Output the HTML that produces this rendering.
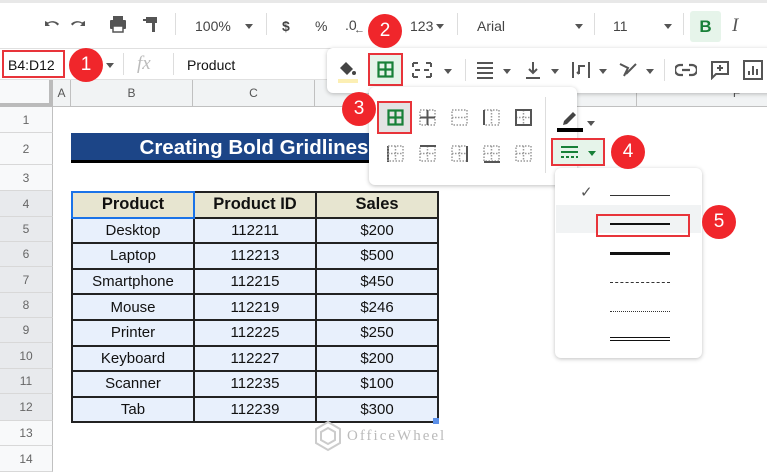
<!DOCTYPE html>
<html><head><meta charset="utf-8">
<style>
*{margin:0;padding:0;box-sizing:border-box}
body{width:767px;height:475px;overflow:hidden;background:#fff;font-family:"Liberation Sans",Arial,sans-serif;position:relative;color:#222}
.a{position:absolute}
.t{position:absolute;font-size:14px;color:#444}
.tri{position:absolute;width:0;height:0;border-left:4px solid transparent;border-right:4px solid transparent;border-top:5px solid #555}
.badge{position:absolute;width:34px;height:34px;border-radius:50%;background:#f0262b;color:#fff;font-size:19px;text-align:center;line-height:34px}
.rh{position:absolute;left:0;width:53px;background:#f8f9fa;border-right:1px solid #c0c0c0;border-bottom:1px solid #d8d8d8;font-size:12px;color:#666;text-align:center}
.ch{position:absolute;top:80px;height:27px;background:#f1f3f4;border-right:1px solid #c0c0c0;border-bottom:1px solid #c0c0c0;font-size:12px;color:#555;text-align:center;line-height:27px}
table{position:absolute;left:71px;top:191px;border-collapse:collapse}
td{width:122px;height:25.6px;border:2px solid #222;text-align:center;font-size:15px;background:#e8f0fc;padding:0;color:#111}
tr:first-child td{background:#e7e5d0;font-weight:bold;font-size:16.5px}
.card{position:absolute;background:#fff;border-radius:6px;box-shadow:0 1px 4px rgba(0,0,0,.25)}
.hl{position:absolute;border:2px solid #e8343a}
</style></head><body>
<div class="a" style="left:0;top:0;width:767px;height:3px;background:#e8e8e8"></div>
<svg class="a" style="left:40px;top:14px" width="140" height="22" viewBox="0 0 140 22" fill="#555">
<path d="M5 7v5h5l-2-2c2-2 6-2 8 0l1.5 1.5 1.5-1.5C17 7 11 6 8 8.5z" />
<path d="M45 7v5h-5l2-2c-2-2-6-2-8 0l-1.5 1.5L31 10c2-3 8-4 11-1.5z"/>
<rect x="70" y="6" width="16" height="9" rx="1"/><rect x="73" y="2" width="10" height="4"/><rect x="73" y="12" width="10" height="6" fill="#fff" stroke="#555" stroke-width="1.5"/>
<rect x="106" y="3" width="11" height="6"/><rect x="112" y="9" width="3" height="9"/><rect x="103" y="5" width="3" height="2"/>
</svg>
<div class="a" style="left:175px;top:13px;width:1px;height:22px;background:#ddd"></div>
<div class="t" style="left:195px;top:18px">100%</div>
<div class="tri" style="left:245px;top:24px"></div>
<div class="a" style="left:266px;top:13px;width:1px;height:22px;background:#ddd"></div>
<div class="t" style="left:282px;top:18px;font-weight:bold">$</div>
<div class="t" style="left:315px;top:18px">%</div>
<div class="t" style="left:345px;top:17px">.0</div>
<div class="t" style="left:354px;top:24px;font-size:11px">←</div>
<div class="t" style="left:410px;top:18px">123</div>
<div class="tri" style="left:436px;top:24px"></div>
<div class="a" style="left:457px;top:13px;width:1px;height:22px;background:#ddd"></div>
<div class="t" style="left:477px;top:18px">Arial</div>
<div class="tri" style="left:575px;top:24px"></div>
<div class="a" style="left:594px;top:13px;width:1px;height:22px;background:#ddd"></div>
<div class="t" style="left:613px;top:18px">11</div>
<div class="tri" style="left:664px;top:24px"></div>
<div class="a" style="left:683px;top:13px;width:1px;height:22px;background:#ddd"></div>
<div class="a" style="left:690px;top:11px;width:31px;height:31px;background:#e6f4ea;border-radius:3px;color:#188038;font-weight:bold;font-size:17px;text-align:center;line-height:31px">B</div>
<div class="t" style="left:732px;top:15px;font-size:19px;font-style:italic;font-family:'Liberation Serif',serif;color:#555">I</div>
<div class="a" style="left:0;top:48px;width:767px;height:32px;border-top:1px solid #e0e0e0;border-bottom:1px solid #e0e0e0"></div>
<div class="t" style="left:8px;top:57px;color:#111">B4:D12</div>
<div class="hl" style="left:2px;top:50px;width:63px;height:28px"></div>
<div class="tri" style="left:106px;top:63px"></div>
<div class="a" style="left:123px;top:53px;width:1px;height:22px;background:#ddd"></div>
<div class="t" style="left:137px;top:53px;font-size:19px;font-style:italic;font-family:'Liberation Serif',serif;color:#bbb">fx</div>
<div class="a" style="left:173px;top:53px;width:1px;height:22px;background:#ddd"></div>
<div class="t" style="left:187px;top:57px;color:#111">Product</div>
<div class="a" style="left:0;top:80px;width:53px;height:27px;background:#f8f9fa;border-right:4px solid #bbb;border-bottom:4px solid #bbb"></div>
<div class="ch" style="left:53px;width:18px">A</div>
<div class="ch" style="left:71px;width:122px">B</div>
<div class="ch" style="left:193px;width:122px">C</div>
<div class="ch" style="left:315px;width:122px">D</div>
<div class="ch" style="left:437px;width:200px">E</div>
<div class="ch" style="left:637px;width:200px">F</div>
<div class="rh" style="top:107px;height:26px;line-height:26px">1</div>
<div class="rh" style="top:133px;height:32px;line-height:32px">2</div>
<div class="rh" style="top:165px;height:26px;line-height:26px">3</div>
<div class="rh" style="top:191px;height:26px;line-height:26px;background:#e8eaed">4</div>
<div class="rh" style="top:217px;height:25px;line-height:25px;background:#e8eaed">5</div>
<div class="rh" style="top:242px;height:25px;line-height:25px;background:#e8eaed">6</div>
<div class="rh" style="top:267px;height:26px;line-height:26px;background:#e8eaed">7</div>
<div class="rh" style="top:293px;height:25px;line-height:25px;background:#e8eaed">8</div>
<div class="rh" style="top:318px;height:25px;line-height:25px;background:#e8eaed">9</div>
<div class="rh" style="top:343px;height:26px;line-height:26px;background:#e8eaed">10</div>
<div class="rh" style="top:369px;height:25px;line-height:25px;background:#e8eaed">11</div>
<div class="rh" style="top:394px;height:27px;line-height:27px;background:#e8eaed">12</div>
<div class="rh" style="top:421px;height:25px;line-height:25px">13</div>
<div class="rh" style="top:446px;height:26px;line-height:26px">14</div>
<div class="a" style="left:71px;top:133px;width:366px;height:30px;background:#1c4587;border-bottom:3px solid #000;color:#fff;font-weight:bold;font-size:20.5px;text-align:center;line-height:29px;white-space:nowrap">Creating Bold Gridlines</div>
<table>
<tr><td style="border:2px solid #1a73e8">Product</td><td>Product ID</td><td>Sales</td></tr>
<tr><td>Desktop</td><td>112211</td><td>$200</td></tr>
<tr><td>Laptop</td><td>112213</td><td>$500</td></tr>
<tr><td>Smartphone</td><td>112215</td><td>$450</td></tr>
<tr><td>Mouse</td><td>112219</td><td>$246</td></tr>
<tr><td>Printer</td><td>112225</td><td>$250</td></tr>
<tr><td>Keyboard</td><td>112227</td><td>$200</td></tr>
<tr><td>Scanner</td><td>112235</td><td>$100</td></tr>
<tr><td>Tab</td><td>112239</td><td>$300</td></tr>
</table>
<div class="a" style="left:433px;top:418px;width:6px;height:6px;background:#5b8fe8"></div>
<svg class="a" style="left:312px;top:420px" width="32" height="32" viewBox="0 0 32 32" fill="none" stroke="#ccc" stroke-width="2"><path d="M16 2L28 9v14L16 30 4 23V9z"/><path d="M16 8l7 4v8l-7 4-7-4v-8z"/></svg>
<div class="t" style="left:347px;top:428px;font-size:15px;color:#bbb;letter-spacing:2px;font-family:'Liberation Serif',serif">OfficeWheel</div>
<div class="card" style="left:327px;top:48px;width:460px;height:45px;border-radius:6px 0 0 6px"></div>
<svg class="a" style="left:336px;top:58px" width="22" height="26" viewBox="0 0 22 26"><path d="M4 10l6-6 7 7-6 6z" fill="#444"/><circle cx="18" cy="15" r="2" fill="#444"/><rect x="2" y="21" width="24" height="4" fill="#fcefb4"/></svg>
<div class="a" style="left:370px;top:54px;width:31px;height:31px;background:#e6f4ea"></div>
<svg class="a" style="left:377px;top:61px" width="17" height="17" viewBox="0 0 17 17" fill="none" stroke="#188038" stroke-width="2.2"><rect x="1.5" y="1.5" width="14" height="14"/><path d="M8.5 1.5v14M1.5 8.5h14"/></svg>
<div class="hl" style="left:368px;top:53px;width:35px;height:33px"></div>
<svg class="a" style="left:411px;top:62px" width="22" height="16" viewBox="0 0 22 16" fill="none" stroke="#555" stroke-width="2"><path d="M2 1v4M2 11v4M20 1v4M20 11v4M2 1h5M2 15h5M15 1h5M15 15h5M4 8h5M13 8h5"/></svg>
<div class="tri" style="left:444px;top:69px"></div>
<div class="a" style="left:465px;top:59px;width:1px;height:22px;background:#ddd"></div>
<svg class="a" style="left:475px;top:61px" width="20" height="18" viewBox="0 0 20 18" stroke="#555" stroke-width="2"><path d="M2 2h16M2 7h16M2 12h16M2 17h16" /></svg>
<div class="tri" style="left:503px;top:69px"></div>
<svg class="a" style="left:523px;top:60px" width="20" height="20" viewBox="0 0 20 20" stroke="#555" stroke-width="2" fill="none"><path d="M10 2v11M6 9l4 4 4-4M3 18h14"/></svg>
<div class="tri" style="left:551px;top:69px"></div>
<svg class="a" style="left:571px;top:60px" width="20" height="20" viewBox="0 0 20 20" stroke="#555" stroke-width="2" fill="none"><path d="M2 2v16M18 2v16M14 6h-6v8M8 14l-2-2"/></svg>
<div class="tri" style="left:599px;top:69px"></div>
<svg class="a" style="left:618px;top:60px" width="20" height="20" viewBox="0 0 20 20" stroke="#555" stroke-width="2" fill="none"><path d="M2 4l8 4-4 8M8 14l10-10"/></svg>
<div class="tri" style="left:646px;top:69px"></div>
<div class="a" style="left:664px;top:59px;width:1px;height:22px;background:#ddd"></div>
<svg class="a" style="left:675px;top:62px" width="22" height="16" viewBox="0 0 22 16" stroke="#555" stroke-width="2.2" fill="none"><path d="M8 3H5a5 5 0 000 10h3M14 3h3a5 5 0 010 10h-3M7 8h8"/></svg>
<svg class="a" style="left:710px;top:60px" width="20" height="20" viewBox="0 0 20 20" stroke="#555" stroke-width="2" fill="none"><path d="M2 2h16v12H6l-4 4zM10 5v6M7 8h6"/></svg>
<svg class="a" style="left:743px;top:60px" width="20" height="20" viewBox="0 0 20 20" stroke="#555" stroke-width="2" fill="none"><rect x="1" y="1" width="18" height="18"/><path d="M6 15v-4M10 15V6M14 15v-6"/></svg>
<div class="card" style="left:369px;top:87px;width:208px;height:98px"></div>
<div class="a" style="left:378px;top:103px;width:33px;height:30px;background:#e3e3e3"></div>
<div class="hl" style="left:377px;top:101px;width:35px;height:33px"></div>
<svg class="a" style="left:387px;top:109px" width="17" height="17" viewBox="0 0 17 17" fill="none" stroke="#188038" stroke-width="2.2"><rect x="1.5" y="1.5" width="14" height="14"/><path d="M8.5 1.5v14M1.5 8.5h14"/></svg>
<svg class="a" style="left:419px;top:109px" width="120" height="54" viewBox="0 0 120 54" fill="none">
<g stroke="#999" stroke-width="1.5" stroke-dasharray="1.5 1.5">
<rect x="1" y="1" width="15" height="15"/><rect x="33" y="1" width="15" height="15"/><path d="M33 8.5h15"/><rect x="65" y="1" width="15" height="15"/><path d="M72.5 1v15"/><path d="M97 8.5h15M104.5 1v15"/>
<rect x="1" y="37" width="15" height="15"/><path d="M8.5 37v15M1 44.5h15"/>
<rect x="33" y="37" width="15" height="15"/><path d="M40.5 37v15M33 44.5h15"/>
<rect x="65" y="37" width="15" height="15"/><path d="M72.5 37v15M65 44.5h15"/>
<rect x="97" y="37" width="15" height="15"/><path d="M104.5 37v15M97 44.5h15"/>
</g>
<g stroke="#555" stroke-width="2">
<path d="M8.5 1v15M1 8.5h15"/><path d="M65 1v15"/><rect x="97" y="1" width="15" height="15"/>
</g>
</svg>
<svg class="a" style="left:387px;top:145px" width="140" height="18" viewBox="0 0 140 18" fill="none" stroke="#555" stroke-width="2">
<path d="M1 1v16M33 1h16M80 1v16M97 17h16"/>
<g stroke="#999" stroke-width="1.5" stroke-dasharray="1.5 1.5"><rect x="1" y="1" width="15" height="15"/><path d="M8.5 1v15M1 8.5h15"/></g>
</svg>
<div class="a" style="left:545px;top:97px;width:1px;height:76px;background:#ddd"></div>
<svg class="a" style="left:560px;top:108px" width="20" height="20" viewBox="0 0 20 20"><path d="M3 17l1-4 9-9 3 3-9 9z" fill="#444"/></svg>
<div class="tri" style="left:587px;top:121px"></div>
<div class="a" style="left:557px;top:128px;width:26px;height:4px;background:#000"></div>
<div class="a" style="left:552px;top:139px;width:52px;height:26px;background:#e6f4ea"></div>
<div class="hl" style="left:551px;top:138px;width:54px;height:28px"></div>
<svg class="a" style="left:560px;top:145px" width="20" height="14" viewBox="0 0 20 14" stroke="#188038" stroke-width="2"><path d="M1 2h17M1 7h17" /><path d="M1 12h17" stroke-dasharray="3 2"/></svg>
<div class="tri" style="left:588px;top:151px;border-top-color:#188038"></div>
<div class="card" style="left:555px;top:168px;width:147px;height:190px"></div>
<div class="a" style="left:556px;top:205px;width:145px;height:28px;background:#f1f3f4"></div>
<div class="t" style="left:580px;top:183px;font-size:15px;color:#555">✓</div>
<div class="a" style="left:610px;top:195px;width:60px;height:1px;background:#333"></div>
<div class="a" style="left:610px;top:223px;width:60px;height:2px;background:#111"></div>
<div class="hl" style="left:596px;top:214px;width:94px;height:23px"></div>
<div class="a" style="left:610px;top:252px;width:60px;height:3px;background:#111"></div>
<div class="a" style="left:610px;top:282px;width:60px;height:0;border-top:1px dashed #333"></div>
<div class="a" style="left:610px;top:311px;width:60px;height:0;border-top:1px dotted #333"></div>
<div class="a" style="left:610px;top:337px;width:60px;height:4px;border-top:1px solid #111;border-bottom:1px solid #111"></div>
<div class="badge" style="left:69px;top:48px">1</div>
<div class="badge" style="left:368px;top:14px">2</div>
<div class="badge" style="left:342px;top:92px">3</div>
<div class="badge" style="left:611px;top:135px">4</div>
<div class="badge" style="left:702px;top:205px">5</div>
</body></html>
